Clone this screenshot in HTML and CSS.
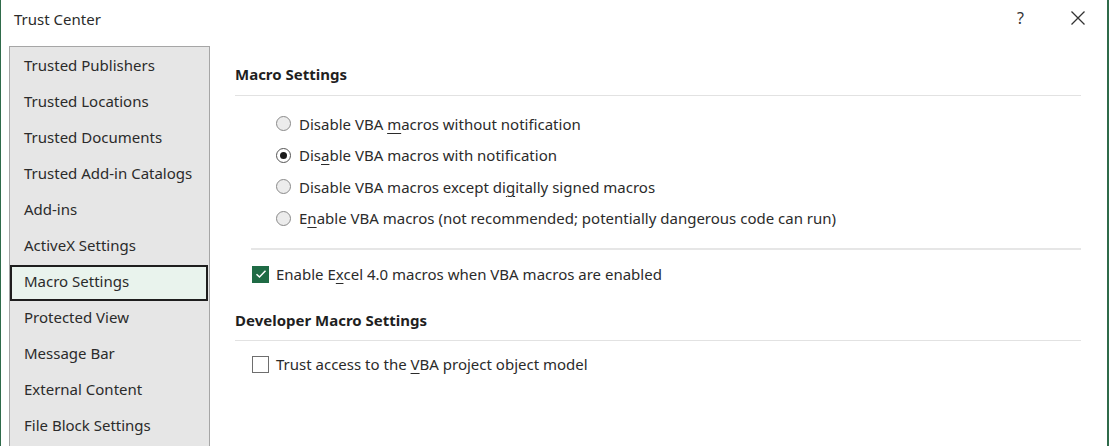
FILE: index.html
```html
<!DOCTYPE html>
<html>
<head>
<meta charset="utf-8">
<link rel="stylesheet" href="styles.css">
</head>
<body>
<div class="window">
  <div class="titlebar">
    <div class="title">Trust Center</div>
    <div class="controls">
      <span class="help">?</span>
      <svg class="close" width="16" height="16" viewBox="0 0 16 16"><path d="M1.5 1.5 L14.5 14.5 M14.5 1.5 L1.5 14.5" stroke="#333" stroke-width="1.3" fill="none"/></svg>
    </div>
  </div>
  <div class="body">
    <nav class="sidebar">
      <div class="nav-item">Trusted Publishers</div>
      <div class="nav-item">Trusted Locations</div>
      <div class="nav-item">Trusted Documents</div>
      <div class="nav-item">Trusted Add-in Catalogs</div>
      <div class="nav-item">Add-ins</div>
      <div class="nav-item">ActiveX Settings</div>
      <div class="nav-item selected">Macro Settings</div>
      <div class="nav-item">Protected View</div>
      <div class="nav-item">Message Bar</div>
      <div class="nav-item">External Content</div>
      <div class="nav-item">File Block Settings</div>
    </nav>
    <main class="content">
      <h2 class="section-title">Macro Settings</h2>
      <div class="rule"></div>
      <div class="radios">
        <div class="radio-row"><span class="radio"></span><span>Disable VBA <u>m</u>acros without notification</span></div>
        <div class="radio-row"><span class="radio checked"></span><span>Dis<u>a</u>ble VBA macros with notification</span></div>
        <div class="radio-row"><span class="radio"></span><span>Disable VBA macros except di<u>g</u>itally signed macros</span></div>
        <div class="radio-row"><span class="radio"></span><span>E<u>n</u>able VBA macros (not recommended; potentially dangerous code can run)</span></div>
      </div>
      <div class="rule inner"></div>
      <div class="check-row first"><span class="checkbox checked"><svg width="12" height="10" viewBox="0 0 12 10"><path d="M1.5 5.2 L4.5 8 L10.5 1.8" stroke="#fff" stroke-width="1.5" fill="none"/></svg></span><span>Enable E<u>x</u>cel 4.0 macros when VBA macros are enabled</span></div>
      <h2 class="section-title dev">Developer Macro Settings</h2>
      <div class="rule dev-rule"></div>
      <div class="check-row last"><span class="checkbox"></span><span>Trust access to the <u>V</u>BA project object model</span></div>
    </main>
  </div>
</div>
</body>
</html>
```

FILE: styles.css
```css
* { box-sizing: border-box; }
html, body { margin: 0; padding: 0; background: #fff; }
body {
  font-family: "Noto Sans", "Open Sans", sans-serif;
  font-size: 15px;
  color: #2b2b2b;
  width: 1110px;
  height: 446px;
  overflow: hidden;
}
.window {
  width: 1109px;
  height: 446px;
  border-left: 1px solid #2f6b4a;
  border-right: 2px solid #2f6b4a;
  background: #fff;
}
.titlebar {
  height: 46px;
  display: flex;
  justify-content: space-between;
  align-items: flex-start;
  padding: 7px 0 0 13px;
}
.title { font-size: 15px; line-height: 24px; }
.controls { display: flex; align-items: center; gap: 46px; padding-right: 21px; height: 22px; }
.help { font-size: 16px; line-height: 22px; color: #333; }
.close { display: block; }
.body { display: flex; }
.sidebar {
  margin-left: 8px;
  width: 201px;
  height: 410px;
  background: #e6e6e6;
  border: 1px solid #a6a6a6;
  border-bottom: none;
  padding-top: 2px;
}
.nav-item {
  height: 36px;
  line-height: 32px;
  padding-left: 14px;
  margin-right: 1px;
}
.nav-item.selected {
  background: #e9f3ed;
  border: 2px solid #1e1e1e;
  padding-left: 12px;
  line-height: 29px;
  height: 36px;
}
.content {
  flex: 1;
  padding: 16px 26px 0 25px;
}
.section-title {
  font-size: 15px;
  font-weight: bold;
  margin: 0;
  line-height: 24px;
  color: #1f1f1f;
}
.rule { height: 1px; background: #e2e2e2; margin-top: 9px; }
.rule.dev-rule { margin-top: 8px; }
.rule.inner { margin-left: 16px; height: 2px; margin-top: 14px; background: #e6e6e6; }
.radios { padding-left: 41px; padding-top: 12px; }
.radio-row { display: flex; align-items: center; height: 31.5px; gap: 8px; }
.radio {
  width: 15px; height: 15px; border-radius: 50%;
  border: 1px solid #8a8a8a;
  background: #ececec;
  display: inline-block;
  position: relative;
}
.radio.checked { background: #fff; border-color: #555; }
.radio.checked::after {
  content: ""; position: absolute; left: 3px; top: 3px;
  width: 7px; height: 7px; border-radius: 50%; background: #1a1a1a;
}
.check-row { display: flex; align-items: center; gap: 7px; padding-left: 17px; height: 24px; }
.check-row.first { margin-top: 12px; }
.check-row.last { margin-top: 11px; }
.checkbox {
  width: 17px; height: 17px;
  border: 1px solid #6e6e6e;
  background: #fff;
  display: inline-flex; align-items: center; justify-content: center;
}
.checkbox.checked { background: #1f6b45; border-color: #1f6b45; }
.section-title.dev { margin-top: 22px; }
u { text-decoration-thickness: 1px; text-underline-offset: 3px; }
```
